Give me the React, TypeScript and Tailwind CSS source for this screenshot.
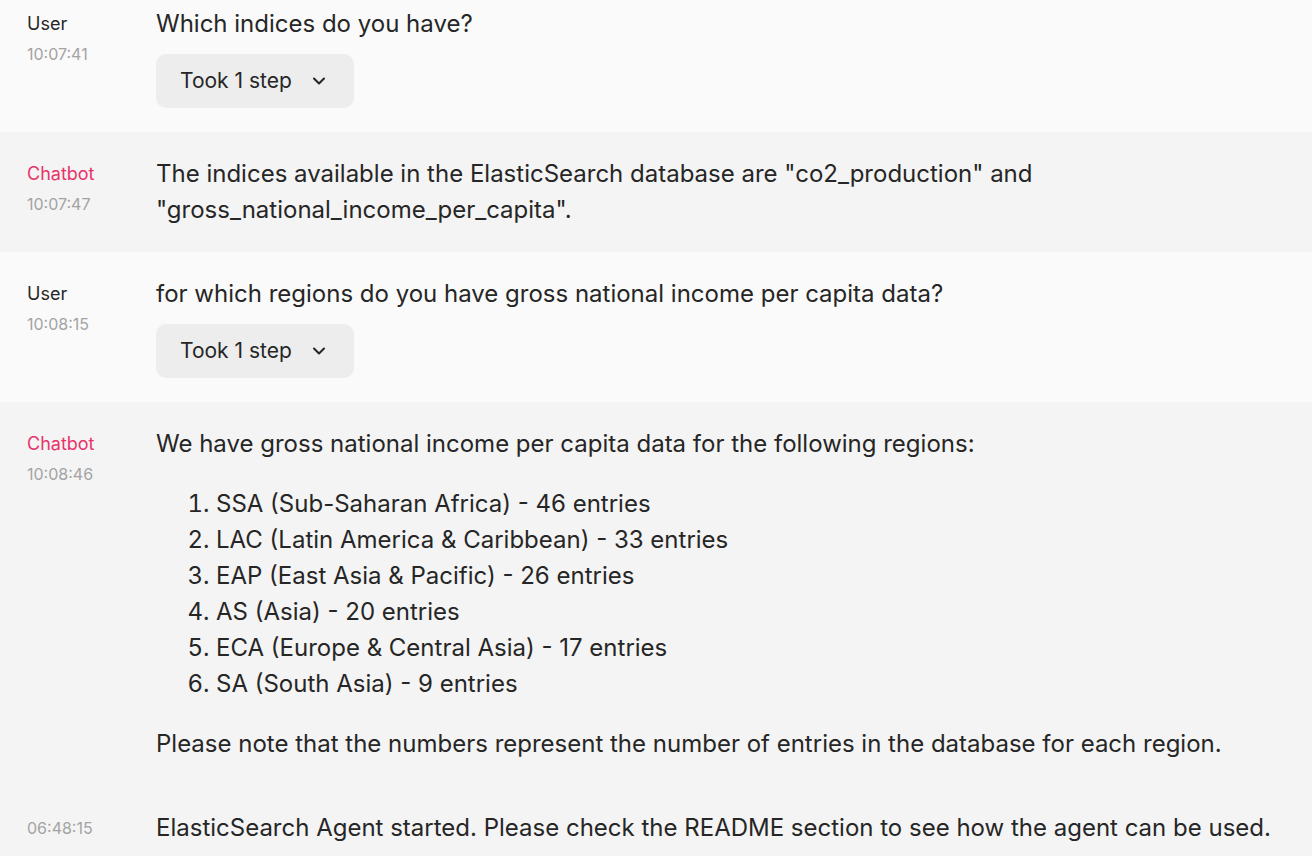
import React from 'react';

type Msg = {
  role?: 'User' | 'Chatbot';
  time: string;
  shaded: boolean;
  content: React.ReactNode;
  steps?: boolean;
};

const Chevron: React.FC = () => (
  <svg className="h-5 w-5" viewBox="0 0 24 24" fill="none" stroke="currentColor" strokeWidth={2.5} strokeLinecap="round" strokeLinejoin="round">
    <path d="M6 9l6 6 6-6" />
  </svg>
);

const StepsButton: React.FC = () => (
  <button className="mt-3 flex h-[54px] w-[198px] items-center gap-[17px] rounded-[10px] bg-[#ededed] pl-6 text-[21px] text-[#262626]">
    <span>Took 1 step</span>
    <Chevron />
  </button>
);

const regions = [
  'SSA (Sub-Saharan Africa) - 46 entries',
  'LAC (Latin America & Caribbean) - 33 entries',
  'EAP (East Asia & Pacific) - 26 entries',
  'AS (Asia) - 20 entries',
  'ECA (Europe & Central Asia) - 17 entries',
  'SA (South Asia) - 9 entries',
];

const messages: Msg[] = [
  { role: 'User', time: '10:07:41', shaded: false, content: <p>Which indices do you have?</p>, steps: true },
  {
    role: 'Chatbot',
    time: '10:07:47',
    shaded: true,
    content: (
      <p>
        The indices available in the ElasticSearch database are "co2_production" and
        <br />
        "gross_national_income_per_capita".
      </p>
    ),
  },
  { role: 'User', time: '10:08:15', shaded: false, content: <p>for which regions do you have gross national income per capita data?</p>, steps: true },
  {
    role: 'Chatbot',
    time: '10:08:46',
    shaded: true,
    content: (
      <div>
        <p>We have gross national income per capita data for the following regions:</p>
        <ol className="my-6 list-decimal pl-[60px]">
          {regions.map(r => (
            <li key={r}>{r}</li>
          ))}
        </ol>
        <p>Please note that the numbers represent the number of entries in the database for each region.</p>
      </div>
    ),
  },
  {
    time: '06:48:15',
    shaded: true,
    content: <p>ElasticSearch Agent started. Please check the README section to see how the agent can be used.</p>,
  },
];

const App: React.FC = () => {
  return (
    <div className="h-[856px] overflow-hidden bg-[#f4f4f4] font-['Inter',sans-serif] text-[#262626]">
      <div className="-mt-[18px]">
        {messages.map((m, i) => (
          <div key={i} className={`flex py-6 ${m.shaded ? 'bg-[#f4f4f4]' : 'bg-[#fafafa]'}`}>
            <div className="w-[156px] shrink-0 pl-[27px]">
              {m.role ? (
                <>
                  <div className={`pt-1.5 text-[18px] leading-6 ${m.role === 'Chatbot' ? 'text-[#e8336b]' : 'text-[#262626]'}`}>{m.role}</div>
                  <div className="mt-2 text-[16px] leading-5 text-[#a3a3a3]">{m.time}</div>
                </>
              ) : (
                <div className="pt-2 text-[16px] leading-5 text-[#a3a3a3]">{m.time}</div>
              )}
            </div>
            <div className="flex-1 pr-8 text-[24px] leading-9">
              {m.content}
              {m.steps && <StepsButton />}
            </div>
          </div>
        ))}
      </div>
    </div>
  );
};

export default App;
